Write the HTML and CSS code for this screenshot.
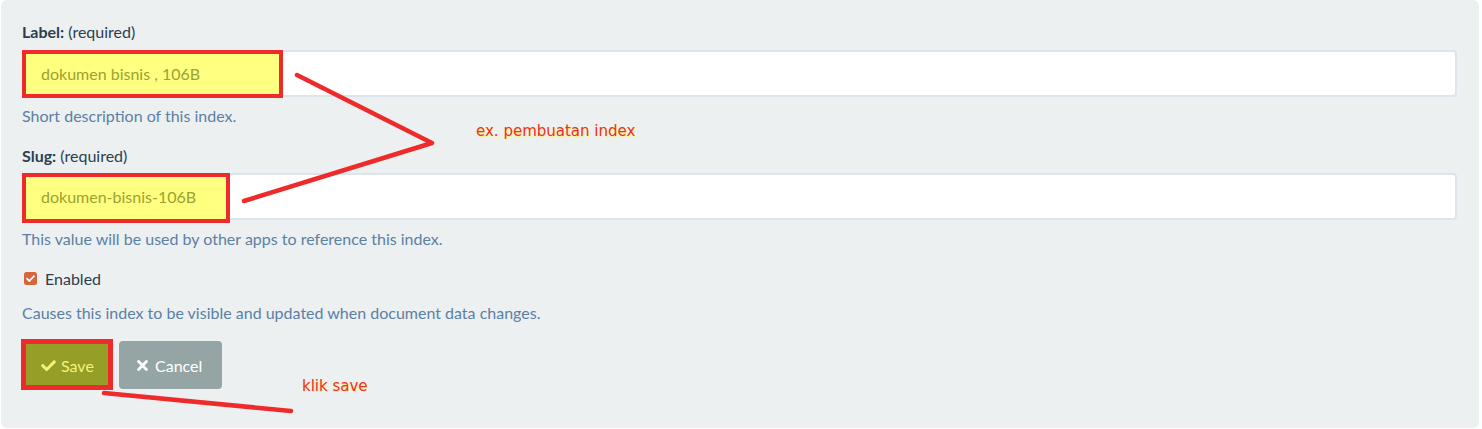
FILE: index.html
```html
<!DOCTYPE html>
<html>
<head>
<meta charset="utf-8">
<link rel="stylesheet" href="styles.css">
</head>
<body>
<div class="panel">
  <div class="form-group">
    <div class="control-label"><b>Label:</b> (required)</div>
    <div class="form-control">
      <span class="mark mark-label"></span>
      <span class="value">dokumen bisnis , 106B</span>
    </div>
    <div class="help-block">Short description of this index.</div>
  </div>
  <div class="form-group">
    <div class="control-label"><b>Slug:</b> (required)</div>
    <div class="form-control">
      <span class="mark mark-slug"></span>
      <span class="value">dokumen-bisnis-106B</span>
    </div>
    <div class="help-block">This value will be used by other apps to reference this index.</div>
  </div>
  <div class="checkbox">
    <svg class="check-box" width="13" height="13" viewBox="0 0 13 13"><rect x="0" y="0" width="13" height="13" rx="2.5" fill="#d6653c"/><path d="M3 6.6 L5.4 9 L10 4.2" fill="none" stroke="#fff" stroke-width="1.8" stroke-linecap="round" stroke-linejoin="round"/></svg>
    <span>Enabled</span>
  </div>
  <div class="help-block help-enabled">Causes this index to be visible and updated when document data changes.</div>
  <div class="actions">
    <div class="save-wrap">
      <button class="btn btn-save"><svg class="ico-check" width="15" height="13" viewBox="0 0 512 440"><path fill="#f3f37a" d="M173.898 411.404l-166.4-166.4c-9.997-9.997-9.997-26.206 0-36.204l36.203-36.204c9.997-9.998 26.207-9.998 36.204 0L192 284.69 432.095 44.596c9.997-9.997 26.207-9.997 36.204 0l36.203 36.204c9.997 9.997 9.997 26.206 0 36.204l-294.4 294.401c-9.998 9.997-26.207 9.997-36.204-.001z"/></svg>Save</button>
      <span class="save-mark"></span>
    </div>
    <button class="btn btn-cancel"><svg class="ico-times" width="11" height="11" viewBox="0 0 11 11"><path d="M1.6 1.6 L9.4 9.4 M9.4 1.6 L1.6 9.4" stroke="#fff" stroke-width="2.8" stroke-linecap="round"/></svg>Cancel</button>
  </div>

  <svg class="annot" width="1482" height="429" viewBox="0 0 1482 429">
    <polyline points="297,75 432,143 244,201" fill="none" stroke="#ee2a2a" stroke-width="4.5" stroke-linecap="round" stroke-linejoin="round"/>
    <line x1="104" y1="393" x2="291" y2="411" stroke="#ee2a2a" stroke-width="4.5" stroke-linecap="round"/>
  </svg>
  <span class="note note-index">ex. pembuatan index</span>
  <span class="note note-save">klik save</span>
</div>
</body>
</html>
```

FILE: styles.css
```css
html, body {
  margin: 0;
  padding: 0;
  background: #ffffff;
}
body {
  font-family: Lato, "Open Sans", "Liberation Sans", sans-serif;
  font-size: 16px;
  color: #2c3e50;
  width: 1482px;
  height: 429px;
  overflow: hidden;
}
.panel {
  position: relative;
  box-sizing: border-box;
  margin-left: 1px;
  width: 1478px;
  height: 428px;
  background: #ecf0f1;
  border-radius: 6px;
  padding: 21px 22px 0 21px;
}
.form-group {
  margin-bottom: 19px;
}
.control-label {
  line-height: 21px;
  margin-bottom: 8px;
}
.form-group + .form-group .control-label {
  margin-bottom: 7px;
}
.control-label b {
  font-weight: 700;
}
.form-control {
  position: relative;
  box-sizing: border-box;
  height: 47px;
  background: #ffffff;
  border: 2px solid #dce4ec;
  border-radius: 4px;
  padding: 0 17px;
  display: flex;
  align-items: center;
}
.value {
  position: relative;
  z-index: 1;
  color: #9ba230;
  font-size: 16px;
}
.mark {
  position: absolute;
  left: -2px;
  top: -2px;
  box-sizing: border-box;
  background: #ffff80;
  border: 4.5px solid #ee2a2a;
}
.mark-label {
  width: 261px;
  height: 48px;
}
.mark-slug {
  width: 208px;
  height: 50px;
}
.help-block {
  margin-top: 8px;
  line-height: 21px;
  color: #5b80a5;
}
.checkbox {
  display: flex;
  align-items: center;
  line-height: 21px;
  height: 21px;
}
.check-box {
  margin-left: 2px;
  margin-right: 8px;
}
.help-enabled {
  margin-top: 13px;
}
.actions {
  display: flex;
  gap: 6px;
  margin-top: 18px;
}
.save-wrap {
  position: relative;
}
.btn {
  font-family: Lato, "Open Sans", "Liberation Sans", sans-serif;
  font-size: 16px;
  height: 48px;
  border: none;
  border-radius: 4px;
  color: #ffffff;
  display: flex;
  align-items: center;
  padding: 0;
  cursor: pointer;
}
.btn-save {
  width: 91px;
  background: #959e26;
  color: #f3f37a;
  padding-left: 19px;
  border-radius: 0;
}
.ico-check {
  margin-right: 5px;
}
.save-mark {
  position: absolute;
  left: -1px;
  top: -2px;
  width: 92px;
  height: 51px;
  box-sizing: border-box;
  border: 5px solid #ee2a2a;
  pointer-events: none;
}
.btn-cancel {
  width: 103px;
  background: #95a5a6;
  padding-left: 18px;
}
.ico-times {
  margin-right: 7px;
}
.annot {
  position: absolute;
  left: -1px;
  top: 0;
  pointer-events: none;
}
.note {
  position: absolute;
  font-family: "DejaVu Sans", sans-serif;
  font-size: 15px;
  line-height: 18px;
  color: #ee3030;
  text-shadow: 1px 1px 0 #f7f37a;
  white-space: nowrap;
}
.note-index {
  left: 475px;
  top: 122px;
}
.note-save {
  left: 301px;
  top: 377px;
}
```
